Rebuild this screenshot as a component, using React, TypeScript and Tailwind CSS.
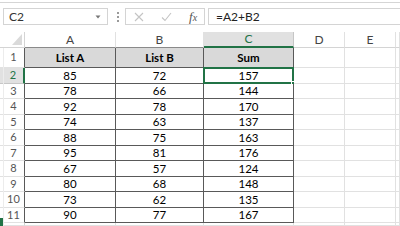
import React from "react";

const A = [85, 78, 92, 74, 88, 95, 67, 80, 73, 90];
const B = [72, 66, 78, 63, 75, 81, 57, 68, 62, 77];
const C = [157, 144, 170, 137, 163, 176, 124, 148, 135, 167];

const DARK = "border-[#595959]";
const LIGHT = "border-[#e1e1e1]";

function ColHeader({ label, kind }: { label: string; kind: "table" | "sel" | "plain" | "rest" }) {
  if (kind === "sel") {
    return (
      <div className="box-border flex items-center justify-center border-r border-r-[#c6c6c6] border-b-2 border-b-[#217346] bg-[#e1e1e1] text-[12px] text-[#217346]">
        {label}
      </div>
    );
  }
  return (
    <div
      className={
        "box-border flex items-center justify-center border-r border-r-[#e1e1e1] border-b text-[12px] text-[#444] bg-white " +
        (kind === "table" ? "border-b-[#8a8a8a]" : "border-b-[#d4d4d4]")
      }
    >
      {label}
    </div>
  );
}

function RowHeader({ n, sel, inTable }: { n: number | string; sel?: boolean; inTable: boolean }) {
  if (sel) {
    return (
      <div className="box-border flex items-center justify-center border-r-2 border-r-[#217346] border-b border-b-[#c6c6c6] bg-[#e1e1e1] text-[11px] text-[#217346] pl-[3px]">
        {n}
      </div>
    );
  }
  return (
    <div
      className={
        "box-border flex items-center justify-center border-r border-b border-b-[#e1e1e1] text-[11px] text-[#555] bg-white pl-[3px] " +
        (inTable ? "border-r-[#595959]" : "border-r-[#d4d4d4]")
      }
    >
      {n}
    </div>
  );
}

function Cell({
  children,
  table,
  header,
  selected,
}: {
  children?: React.ReactNode;
  table?: boolean;
  header?: boolean;
  selected?: boolean;
}) {
  return (
    <div
      className={
        "box-border relative flex items-center justify-center border-r border-b text-[11.5px] text-black " +
        (table ? DARK + " " : LIGHT + " ") +
        (header ? "bg-[#d9d9d9] font-bold " : "bg-white ")
      }
    >
      {children}
      {selected && (
        <>
          <div className="absolute left-[-1px] top-[-1px] right-[-1px] bottom-[-1px] border-2 border-[#217346]" />
          <div className="absolute right-[-4px] bottom-[-4px] w-[6px] h-[6px] bg-[#217346] border border-white" />
        </>
      )}
    </div>
  );
}

export default function App() {
  const rows = [];
  rows.push(
    <React.Fragment key="r1">
      <RowHeader n={1} inTable />
      <Cell table header>List A</Cell>
      <Cell table header>List B</Cell>
      <Cell table header>Sum</Cell>
      <Cell />
      <Cell />
      <Cell />
    </React.Fragment>
  );
  for (let i = 0; i < 10; i++) {
    rows.push(
      <React.Fragment key={"r" + (i + 2)}>
        <RowHeader n={i + 2} sel={i === 0} inTable />
        <Cell table>{A[i]}</Cell>
        <Cell table>{B[i]}</Cell>
        <Cell table selected={i === 0}>{C[i]}</Cell>
        <Cell />
        <Cell />
        <Cell />
      </React.Fragment>
    );
  }
  rows.push(
    <React.Fragment key="r12">
      <RowHeader n="" inTable={false} />
      <Cell />
      <Cell />
      <Cell />
      <Cell />
      <Cell />
      <Cell />
    </React.Fragment>
  );

  return (
    <div
      className="relative w-[400px] h-[226px] overflow-hidden bg-white pt-[2px]"
      style={{ fontFamily: "Lato, 'Liberation Sans', sans-serif" }}
    >
      {/* formula bar */}
      <div className="h-[30px] border-t border-[#d5d5d5] pt-[5px] flex items-start">
        <div className="ml-[3px] w-[105px] h-[17px] border border-[#d4d4d4] flex items-center pl-[5px] pr-[6px] text-[12px] text-[#333]">
          <span className="flex-1">C2</span>
          <svg width="6" height="4" viewBox="0 0 6 4">
            <path d="M0.5 0.5 L5.5 0.5 L3 3.5 Z" fill="#777" />
          </svg>
        </div>
        <div className="ml-[8px] w-[3px] h-[17px] flex flex-col items-center justify-center gap-[2px]">
          <div className="w-[2px] h-[2px] bg-[#9a9a9a]" />
          <div className="w-[2px] h-[2px] bg-[#9a9a9a]" />
          <div className="w-[2px] h-[2px] bg-[#9a9a9a]" />
        </div>
        <div className="ml-[6px] w-[80px] h-[17px] border border-[#d4d4d4] flex items-center">
          <svg className="ml-[8px]" width="10" height="10" viewBox="0 0 10 10">
            <path d="M1 1 L9 9 M9 1 L1 9" stroke="#c4c4c4" strokeWidth="1.1" fill="none" />
          </svg>
          <svg className="ml-[17px]" width="11" height="10" viewBox="0 0 11 10">
            <path d="M1 5.5 L4 8.5 L10 1" stroke="#c4c4c4" strokeWidth="1.1" fill="none" />
          </svg>
          <span
            className="ml-[17px] text-[13px] italic text-[#555] leading-none"
            style={{ fontFamily: "'Liberation Serif', serif" }}
          >
            f<span className="text-[10px]">x</span>
          </span>
        </div>
        <div className="ml-[3px] flex-1 h-[17px] border border-r-0 border-[#d4d4d4] flex items-center pl-[7px] text-[12px] text-[#222]">
          =A2+B2
        </div>
      </div>

      {/* grid */}
      <div className="grid grid-cols-[25px_91px_88px_90px_51px_51px_1fr] grid-rows-[16px_20px_repeat(10,15.5px)_1fr] h-[194px]">
        <div className="box-border relative border-r border-b border-[#d4d4d4] bg-white">
          <svg className="absolute right-[2px] bottom-[2px]" width="10" height="11" viewBox="0 0 10 11">
            <path d="M10 0 L10 11 L0 11 Z" fill="#dadada" />
          </svg>
        </div>
        <ColHeader label="A" kind="table" />
        <ColHeader label="B" kind="table" />
        <ColHeader label="C" kind="sel" />
        <ColHeader label="D" kind="plain" />
        <ColHeader label="E" kind="plain" />
        <ColHeader label="" kind="rest" />
        {rows}
      </div>

      <div className="absolute left-[3px] top-[48px] bottom-0 w-px bg-[#ececec]" />
      <div className="absolute left-0 top-[218px] w-[3px] h-[8px] bg-[#217346]" />
    </div>
  );
}
